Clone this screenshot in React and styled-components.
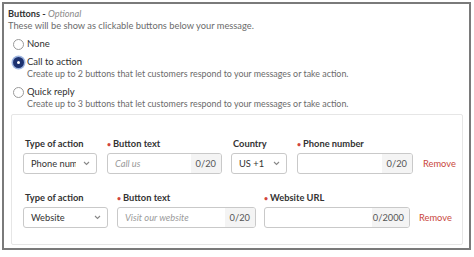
import React from "react"
import styled, { createGlobalStyle } from "styled-components"

const Global = createGlobalStyle`
  html, body { margin: 0; padding: 0; background: #fff; }
  body { font-family: Lato, "Open Sans", sans-serif; color: #2f2f2f; }
`

const Page = styled.div`
  padding: 2px;
`

const Frame = styled.div`
  box-sizing: border-box;
  width: 469px;
  height: 248px;
  border: 2px solid #7a7a7a;
  padding: 4px 0 0 4px;
`

const Title = styled.div`
  font-size: 9.2px;
  line-height: 12px;
  font-weight: 700;
  color: #333;
  em { font-weight: 400; color: #8a8a8a; }
`

const Hint = styled.div`
  font-size: 9.3px;
  line-height: 12px;
  color: #6b6b6b;
`

const Options = styled.div`
  display: flex;
  flex-direction: column;
  gap: 6px;
  padding: 6px 0 0 5px;
`

const Option = styled.div`
  display: grid;
  grid-template-columns: 14px 1fr;
  align-items: center;
`

const Circle = styled.span`
  width: 11px;
  height: 11px;
  border-radius: 50%;
  box-sizing: border-box;
  border: 1px solid #9a9a9a;
  background: #fff;
  ${({ $on }) =>
    $on &&
    `
    border: 4px solid #1d3270;
    box-shadow: 0 0 0 1.5px #9fb6e0;
  `}
`

const OptLabel = styled.span`
  font-size: 9.5px;
  line-height: 12px;
  color: #2f2f2f;
`

const OptDesc = styled.span`
  grid-column: 2;
  font-size: 8.9px;
  line-height: 12px;
  color: #6b6b6b;
`

const Panel = styled.div`
  margin: 4px 0 0 3px;
  width: 452px;
  height: 131px;
  box-sizing: border-box;
  border: 1px solid #e6e6e6;
  border-radius: 2px;
  padding: 23px 0 0 11px;
  display: flex;
  flex-direction: column;
  gap: 18px;
`

const Row = styled.div`
  display: flex;
  align-items: flex-end;
`

const Field = styled.div`
  display: flex;
  flex-direction: column;
  gap: 3px;
  width: ${({ $w }) => $w}px;
  margin-right: ${({ $gap }) => $gap}px;
`

const Label = styled.div`
  font-size: 9.3px;
  line-height: 12px;
  font-weight: 700;
  color: #333;
  white-space: nowrap;
  &::before {
    content: ${({ $req }) => ($req ? '"•"' : '""')};
    color: #d1453b;
    font-size: 7px;
    margin-right: 2px;
  }
`

const Box = styled.div`
  height: 21px;
  box-sizing: border-box;
  border: 1px solid #c9c9c9;
  border-radius: 3px;
  display: flex;
  align-items: stretch;
  overflow: hidden;
  background: #fff;
`

const SelectText = styled.span`
  flex: 1;
  padding-left: 7px;
  font-size: 9.3px;
  line-height: 19px;
  color: #333;
  white-space: nowrap;
  overflow: hidden;
`

const Chevron = styled.span`
  width: 20px;
  flex: none;
  display: flex;
  align-items: center;
  justify-content: center;
`

const Input = styled.span`
  flex: 1;
  padding-left: 7px;
  font-size: 9.3px;
  line-height: 19px;
  font-style: italic;
  color: #9a9a9a;
  white-space: nowrap;
`

const Counter = styled.span`
  width: ${({ $w }) => $w}px;
  flex: none;
  background: #f4f4f4;
  font-size: 9.3px;
  line-height: 19px;
  color: #555;
  text-align: right;
  padding-right: 5px;
  box-sizing: border-box;
`

const Remove = styled.span`
  font-size: 9.3px;
  line-height: 21px;
  color: #c9473d;
`

const Down = () => (
  <svg width="7" height="5" viewBox="0 0 7 5">
    <path d="M1 1l2.5 2.5L6 1" fill="none" stroke="#888" strokeWidth="1.1" />
  </svg>
)

const Select = ({ label, value, w, gap }) => (
  <Field $w={w} $gap={gap}>
    <Label>{label}</Label>
    <Box>
      <SelectText>{value}</SelectText>
      <Chevron>
        <Down />
      </Chevron>
    </Box>
  </Field>
)

const TextField = ({ label, placeholder, count, cw, w, gap }) => (
  <Field $w={w} $gap={gap}>
    <Label $req>{label}</Label>
    <Box>
      <Input>{placeholder}</Input>
      <Counter $w={cw}>{count}</Counter>
    </Box>
  </Field>
)

const options = [
  { label: "None" },
  {
    label: "Call to action",
    on: true,
    desc: "Create up to 2 buttons that let customers respond to your messages or take action.",
  },
  {
    label: "Quick reply",
    desc: "Create up to 3 buttons that let customers respond to your messages or take action.",
  },
]

export default function App() {
  return (
    <Page>
      <Global />
      <Frame>
        <Title>
          Buttons - <em>Optional</em>
        </Title>
        <Hint>These will be show as clickable buttons below your message.</Hint>
        <Options>
          {options.map(o => (
            <Option key={o.label}>
              <Circle $on={o.on} />
              <OptLabel>{o.label}</OptLabel>
              {o.desc && <OptDesc>{o.desc}</OptDesc>}
            </Option>
          ))}
        </Options>
        <Panel>
          <Row>
            <Select label="Type of action" value="Phone number" w={74} gap={10} />
            <TextField label="Button text" placeholder="Call us" count="0/20" cw={30} w={115} gap={9} />
            <Select label="Country" value="US +1" w={56} gap={10} />
            <TextField label="Phone number" placeholder="" count="0/20" cw={30} w={116} gap={10} />
            <Remove>Remove</Remove>
          </Row>
          <Row>
            <Select label="Type of action" value="Website" w={85} gap={9} />
            <TextField label="Button text" placeholder="Visit our website" count="0/20" cw={30} w={139} gap={8} />
            <TextField label="Website URL" placeholder="" count="0/2000" cw={37} w={146} gap={9} />
            <Remove>Remove</Remove>
          </Row>
        </Panel>
      </Frame>
    </Page>
  )
}
